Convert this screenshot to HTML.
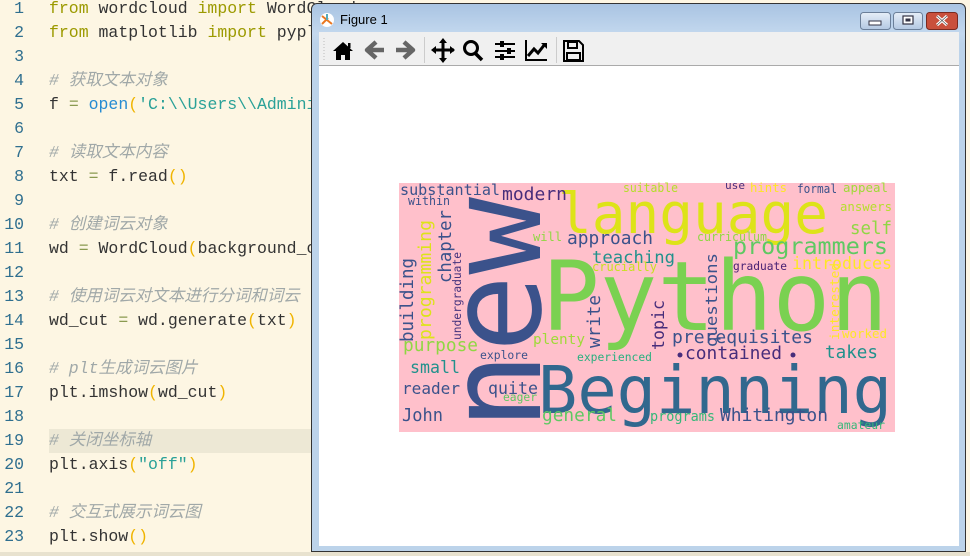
<!DOCTYPE html>
<html><head><meta charset="utf-8"><style>
html,body{margin:0;padding:0;width:970px;height:556px;overflow:hidden;background:#fdf6e3;position:relative}
.ln{position:absolute;left:0;width:24px;text-align:right;font:16.5px/18px "Liberation Mono","DejaVu Sans Mono",monospace;color:#2f6f8f}
.cd{position:absolute;left:49px;font:16.5px/18px "Liberation Mono","Noto Sans CJK SC",monospace;color:#333;white-space:pre}
.k{color:#9c9a00}.c{color:#a0a8a8;font-style:italic}.b{color:#268bd2}.p{color:#f0b400}.s{color:#2aa198}.o{color:#8a9a50}
</style></head><body>
<div style="position:absolute;left:49px;top:429px;width:270px;height:24px;background:#ede8d5"></div>
<div style="position:absolute;left:0;top:552px;width:970px;height:4px;background:#e8e2cf"></div>
<div class="ln" style="top:0">1</div><div class="cd" style="top:0"><span class="k">from</span> wordcloud <span class="k">import</span> WordCloud</div>
<div class="ln" style="top:24px">2</div><div class="cd" style="top:24px"><span class="k">from</span> matplotlib <span class="k">import</span> pyplot</div>
<div class="ln" style="top:48px">3</div>
<div class="ln" style="top:72px">4</div><div class="cd c" style="top:72px"># 获取文本对象</div>
<div class="ln" style="top:96px">5</div><div class="cd" style="top:96px">f <span class="o">=</span> <span class="b">open</span><span class="p">(</span><span class="s">'C:\\Users\\Administrator</span></div>
<div class="ln" style="top:120px">6</div>
<div class="ln" style="top:144px">7</div><div class="cd c" style="top:144px"># 读取文本内容</div>
<div class="ln" style="top:168px">8</div><div class="cd" style="top:168px">txt <span class="o">=</span> f.read<span class="p">()</span></div>
<div class="ln" style="top:192px">9</div>
<div class="ln" style="top:216px">10</div><div class="cd c" style="top:216px"># 创建词云对象</div>
<div class="ln" style="top:240px">11</div><div class="cd" style="top:240px">wd <span class="o">=</span> WordCloud<span class="p">(</span>background_color</div>
<div class="ln" style="top:264px">12</div>
<div class="ln" style="top:288px">13</div><div class="cd c" style="top:288px"># 使用词云对文本进行分词和词云</div>
<div class="ln" style="top:312px">14</div><div class="cd" style="top:312px">wd_cut <span class="o">=</span> wd.generate<span class="p">(</span>txt<span class="p">)</span></div>
<div class="ln" style="top:336px">15</div>
<div class="ln" style="top:360px">16</div><div class="cd c" style="top:360px"># plt生成词云图片</div>
<div class="ln" style="top:384px">17</div><div class="cd" style="top:384px">plt.imshow<span class="p">(</span>wd_cut<span class="p">)</span></div>
<div class="ln" style="top:408px">18</div>
<div class="ln" style="top:432px">19</div><div class="cd c" style="top:432px"># 关闭坐标轴</div>
<div class="ln" style="top:456px">20</div><div class="cd" style="top:456px">plt.axis<span class="p">(</span><span class="s">"off"</span><span class="p">)</span></div>
<div class="ln" style="top:480px">21</div>
<div class="ln" style="top:504px">22</div><div class="cd c" style="top:504px"># 交互式展示词云图</div>
<div class="ln" style="top:528px">23</div><div class="cd" style="top:528px">plt.show<span class="p">()</span></div>

<div style="position:absolute;left:311px;top:3px;width:655px;height:549px;border:1px solid #333;border-radius:6px 6px 0 0;background:linear-gradient(#a9c4e2,#c3d8ee 30px,#bcd3ea 40px);box-sizing:border-box"></div>
<div style="position:absolute;left:319px;top:32px;width:640px;height:33px;background:#f0f0f0;border-bottom:1px solid #aaa"></div>
<div style="position:absolute;left:319px;top:66px;width:640px;height:480px;background:#fff"></div>
<div style="position:absolute;left:340px;top:12px;font:13px 'Liberation Sans',sans-serif;color:#000">Figure 1</div>
<svg style="position:absolute;left:0;top:0" width="970" height="556">
<circle cx="327" cy="20" r="7" fill="#fff"/><path d="M322 16l10 8M322 24l6-6" stroke="#e87722" stroke-width="2"/><path d="M327 14v6" stroke="#5ab" stroke-width="2"/>
<g stroke="#6b7f99" fill="url(#g1)"><rect x="860.5" y="12.5" width="30" height="17" rx="3"/><rect x="893.5" y="12.5" width="29" height="17" rx="3"/></g>
<rect x="926.5" y="12.5" width="31" height="17" rx="3" fill="#c9503c" stroke="#7a2a20"/>
<defs><linearGradient id="g1" x1="0" y1="0" x2="0" y2="1"><stop offset="0" stop-color="#e6eef8"/><stop offset="1" stop-color="#b3c8e2"/></linearGradient></defs>
<rect x="869" y="21" width="12" height="4" fill="#fff" stroke="#334" stroke-width="1"/>
<rect x="903" y="16" width="10" height="8" fill="#fff" stroke="#334" stroke-width="1.2"/><rect x="905.5" y="18.5" width="5" height="3" fill="#334"/>
<path d="M937 16l10 9M947 16l-10 9" stroke="#fff" stroke-width="3"/>
<path d="M937 16l10 9M947 16l-10 9" stroke="#444" stroke-width=".6"/>
<line x1="324" y1="38" x2="324" y2="62" stroke="#bbb" stroke-dasharray="1 2"/>
<line x1="424.5" y1="37" x2="424.5" y2="63" stroke="#ccc"/><line x1="556.5" y1="37" x2="556.5" y2="63" stroke="#ccc"/>
<path d="M343 42l-10 9h3v9h5v-5h4v5h5v-9h3z" fill="#000"/><rect x="348" y="43" width="2.5" height="5" fill="#000"/>
<path d="M376 42l-9 8 9 8M368 50h16" stroke="#666" stroke-width="4.5" fill="none" stroke-linejoin="round"/>
<path d="M404 42l9 8-9 8M412 50h-16" stroke="#666" stroke-width="4.5" fill="none" stroke-linejoin="round"/>
<path d="M443 40v21M433 50h21" stroke="#000" stroke-width="3"/><path d="M443 38l-4 5h8zM443 63l-4-5h8zM431 50l5-4v8zM455 50l-5-4v8z" fill="#000"/>
<circle cx="471" cy="48" r="6.5" stroke="#000" stroke-width="3" fill="none"/><path d="M475 53l7 7" stroke="#000" stroke-width="3.5"/>
<path d="M495 44h20M495 51h20M495 57h20" stroke="#000" stroke-width="2"/><rect x="500" y="41" width="4" height="6" fill="#000"/><rect x="507" y="48" width="4" height="6" fill="#000"/><rect x="500" y="54" width="4" height="6" fill="#000"/>
<path d="M526 40v20h21" stroke="#000" stroke-width="2" fill="none"/><path d="M528 56l6-7 4 4 7-9" stroke="#000" stroke-width="3" fill="none"/><path d="M541 43h6v6z" fill="#000"/>
<path d="M564 41h15l4 4v16h-19z" stroke="#000" stroke-width="2" fill="none"/><rect x="568" y="42" width="9" height="6" fill="none" stroke="#000" stroke-width="2"/><rect x="567" y="53" width="13" height="7" fill="none" stroke="#000" stroke-width="2"/>

<rect x="399" y="183" width="496" height="249" fill="#ffc0cb"/>
<g font-family="DejaVu Sans Mono,Liberation Mono,monospace">
<text transform="translate(540,430) rotate(-90)" font-size="130" fill="#3b528b" textLength="233" lengthAdjust="spacingAndGlyphs">new</text>
<text x="542" y="330" font-size="96" fill="#7ad151" textLength="346" lengthAdjust="spacingAndGlyphs">Python</text>
<text x="538" y="413" font-size="66" fill="#31688e" textLength="354" lengthAdjust="spacingAndGlyphs">Beginning</text>
<text x="558" y="233" font-size="56" fill="#dde318" textLength="270" lengthAdjust="spacingAndGlyphs">language</text>
<text x="733" y="254" font-size="23" fill="#5ec962" textLength="155" lengthAdjust="spacingAndGlyphs">programmers</text>
<text x="567" y="244" font-size="18" fill="#3b528b" textLength="86" lengthAdjust="spacingAndGlyphs">approach</text>
<text x="592" y="263" font-size="17" fill="#21918c" textLength="83" lengthAdjust="spacingAndGlyphs">teaching</text>
<text x="400" y="195" font-size="15" fill="#3b528b" textLength="100" lengthAdjust="spacingAndGlyphs">substantial</text>
<text x="502" y="200" font-size="18" fill="#472d7b" textLength="65" lengthAdjust="spacingAndGlyphs">modern</text>
<text x="408" y="205" font-size="12" fill="#3b528b" textLength="42" lengthAdjust="spacingAndGlyphs">within</text>
<text x="623" y="192" font-size="12" fill="#b5de2b" textLength="55" lengthAdjust="spacingAndGlyphs">suitable</text>
<text x="725" y="189" font-size="11" fill="#472d7b" textLength="20" lengthAdjust="spacingAndGlyphs">use</text>
<text x="750" y="192" font-size="12" fill="#fde725" textLength="37" lengthAdjust="spacingAndGlyphs">hints</text>
<text x="797" y="193" font-size="12" fill="#3b528b" textLength="40" lengthAdjust="spacingAndGlyphs">formal</text>
<text x="843" y="192" font-size="12.5" fill="#a0da39" textLength="45" lengthAdjust="spacingAndGlyphs">appeal</text>
<text x="840" y="211" font-size="12.5" fill="#b5de2b" textLength="52" lengthAdjust="spacingAndGlyphs">answers</text>
<text x="850" y="234" font-size="17.5" fill="#90d743" textLength="42" lengthAdjust="spacingAndGlyphs">self</text>
<text x="533" y="241" font-size="12" fill="#90d743" textLength="29" lengthAdjust="spacingAndGlyphs">will</text>
<text x="697" y="241" font-size="12" fill="#90d743" textLength="70" lengthAdjust="spacingAndGlyphs">curriculum</text>
<text x="792" y="269" font-size="17" fill="#fde725" textLength="100" lengthAdjust="spacingAndGlyphs">introduces</text>
<text x="592" y="271" font-size="12" fill="#c8e020" textLength="65" lengthAdjust="spacingAndGlyphs">crucially</text>
<text x="733" y="270" font-size="11.5" fill="#482173" textLength="54" lengthAdjust="spacingAndGlyphs">graduate</text>
<text transform="translate(451,283) rotate(-90)" font-size="17.5" fill="#3b528b" textLength="73" lengthAdjust="spacingAndGlyphs">chapter</text>
<text transform="translate(431,340) rotate(-90)" font-size="18" fill="#dde318" textLength="120" lengthAdjust="spacingAndGlyphs">programming</text>
<text transform="translate(413,342) rotate(-90)" font-size="17.5" fill="#3b528b" textLength="84" lengthAdjust="spacingAndGlyphs">building</text>
<text transform="translate(461,340) rotate(-90)" font-size="11.5" fill="#46337e" textLength="88" lengthAdjust="spacingAndGlyphs">undergraduate</text>
<text transform="translate(600,348) rotate(-90)" font-size="17.5" fill="#3b528b" textLength="53" lengthAdjust="spacingAndGlyphs">write</text>
<text transform="translate(664,350) rotate(-90)" font-size="17" fill="#472d7b" textLength="50" lengthAdjust="spacingAndGlyphs">topic</text>
<text transform="translate(717,347) rotate(-90)" font-size="16" fill="#3b528b" textLength="94" lengthAdjust="spacingAndGlyphs">questions</text>
<text transform="translate(839,340) rotate(-90)" font-size="12.5" fill="#fde725" textLength="77" lengthAdjust="spacingAndGlyphs">interested</text>
<text x="672" y="343" font-size="18" fill="#3b528b" textLength="141" lengthAdjust="spacingAndGlyphs">prerequisites</text>
<text x="842" y="338" font-size="12.5" fill="#fde725" textLength="45" lengthAdjust="spacingAndGlyphs">worked</text>
<text x="403" y="351" font-size="18" fill="#90d743" textLength="75" lengthAdjust="spacingAndGlyphs">purpose</text>
<text x="533" y="344" font-size="14.5" fill="#a0da39" textLength="52" lengthAdjust="spacingAndGlyphs">plenty</text>
<text x="825" y="358" font-size="17.5" fill="#21918c" textLength="53" lengthAdjust="spacingAndGlyphs">takes</text>
<text x="685" y="359" font-size="18" fill="#472d7b" textLength="97" lengthAdjust="spacingAndGlyphs">contained</text>
<circle cx="680" cy="355" r="2.5" fill="#472d7b"/><circle cx="793" cy="355" r="2.5" fill="#472d7b"/>
<text x="480" y="359" font-size="11.5" fill="#3b528b" textLength="48" lengthAdjust="spacingAndGlyphs">explore</text>
<text x="577" y="361" font-size="11.5" fill="#29af7f" textLength="75" lengthAdjust="spacingAndGlyphs">experienced</text>
<text x="410" y="373" font-size="17" fill="#21918c" textLength="50" lengthAdjust="spacingAndGlyphs">small</text>
<text x="402" y="394" font-size="16" fill="#3b528b" textLength="58" lengthAdjust="spacingAndGlyphs">reader</text>
<text x="488" y="394" font-size="17" fill="#3b528b" textLength="50" lengthAdjust="spacingAndGlyphs">quite</text>
<text x="503" y="401" font-size="11.5" fill="#5ec962" textLength="34" lengthAdjust="spacingAndGlyphs">eager</text>
<text x="402" y="421" font-size="17.5" fill="#3b528b" textLength="41" lengthAdjust="spacingAndGlyphs">John</text>
<text x="542" y="421" font-size="18" fill="#5ec962" textLength="75" lengthAdjust="spacingAndGlyphs">general</text>
<text x="650" y="421" font-size="14" fill="#35b779" textLength="65" lengthAdjust="spacingAndGlyphs">programs</text>
<text x="720" y="421" font-size="18" fill="#3b528b" textLength="108" lengthAdjust="spacingAndGlyphs">Whitington</text>
<text x="837" y="429" font-size="11.5" fill="#35b779" textLength="48" lengthAdjust="spacingAndGlyphs">amateur</text>
</g>
</svg>
</body></html>
